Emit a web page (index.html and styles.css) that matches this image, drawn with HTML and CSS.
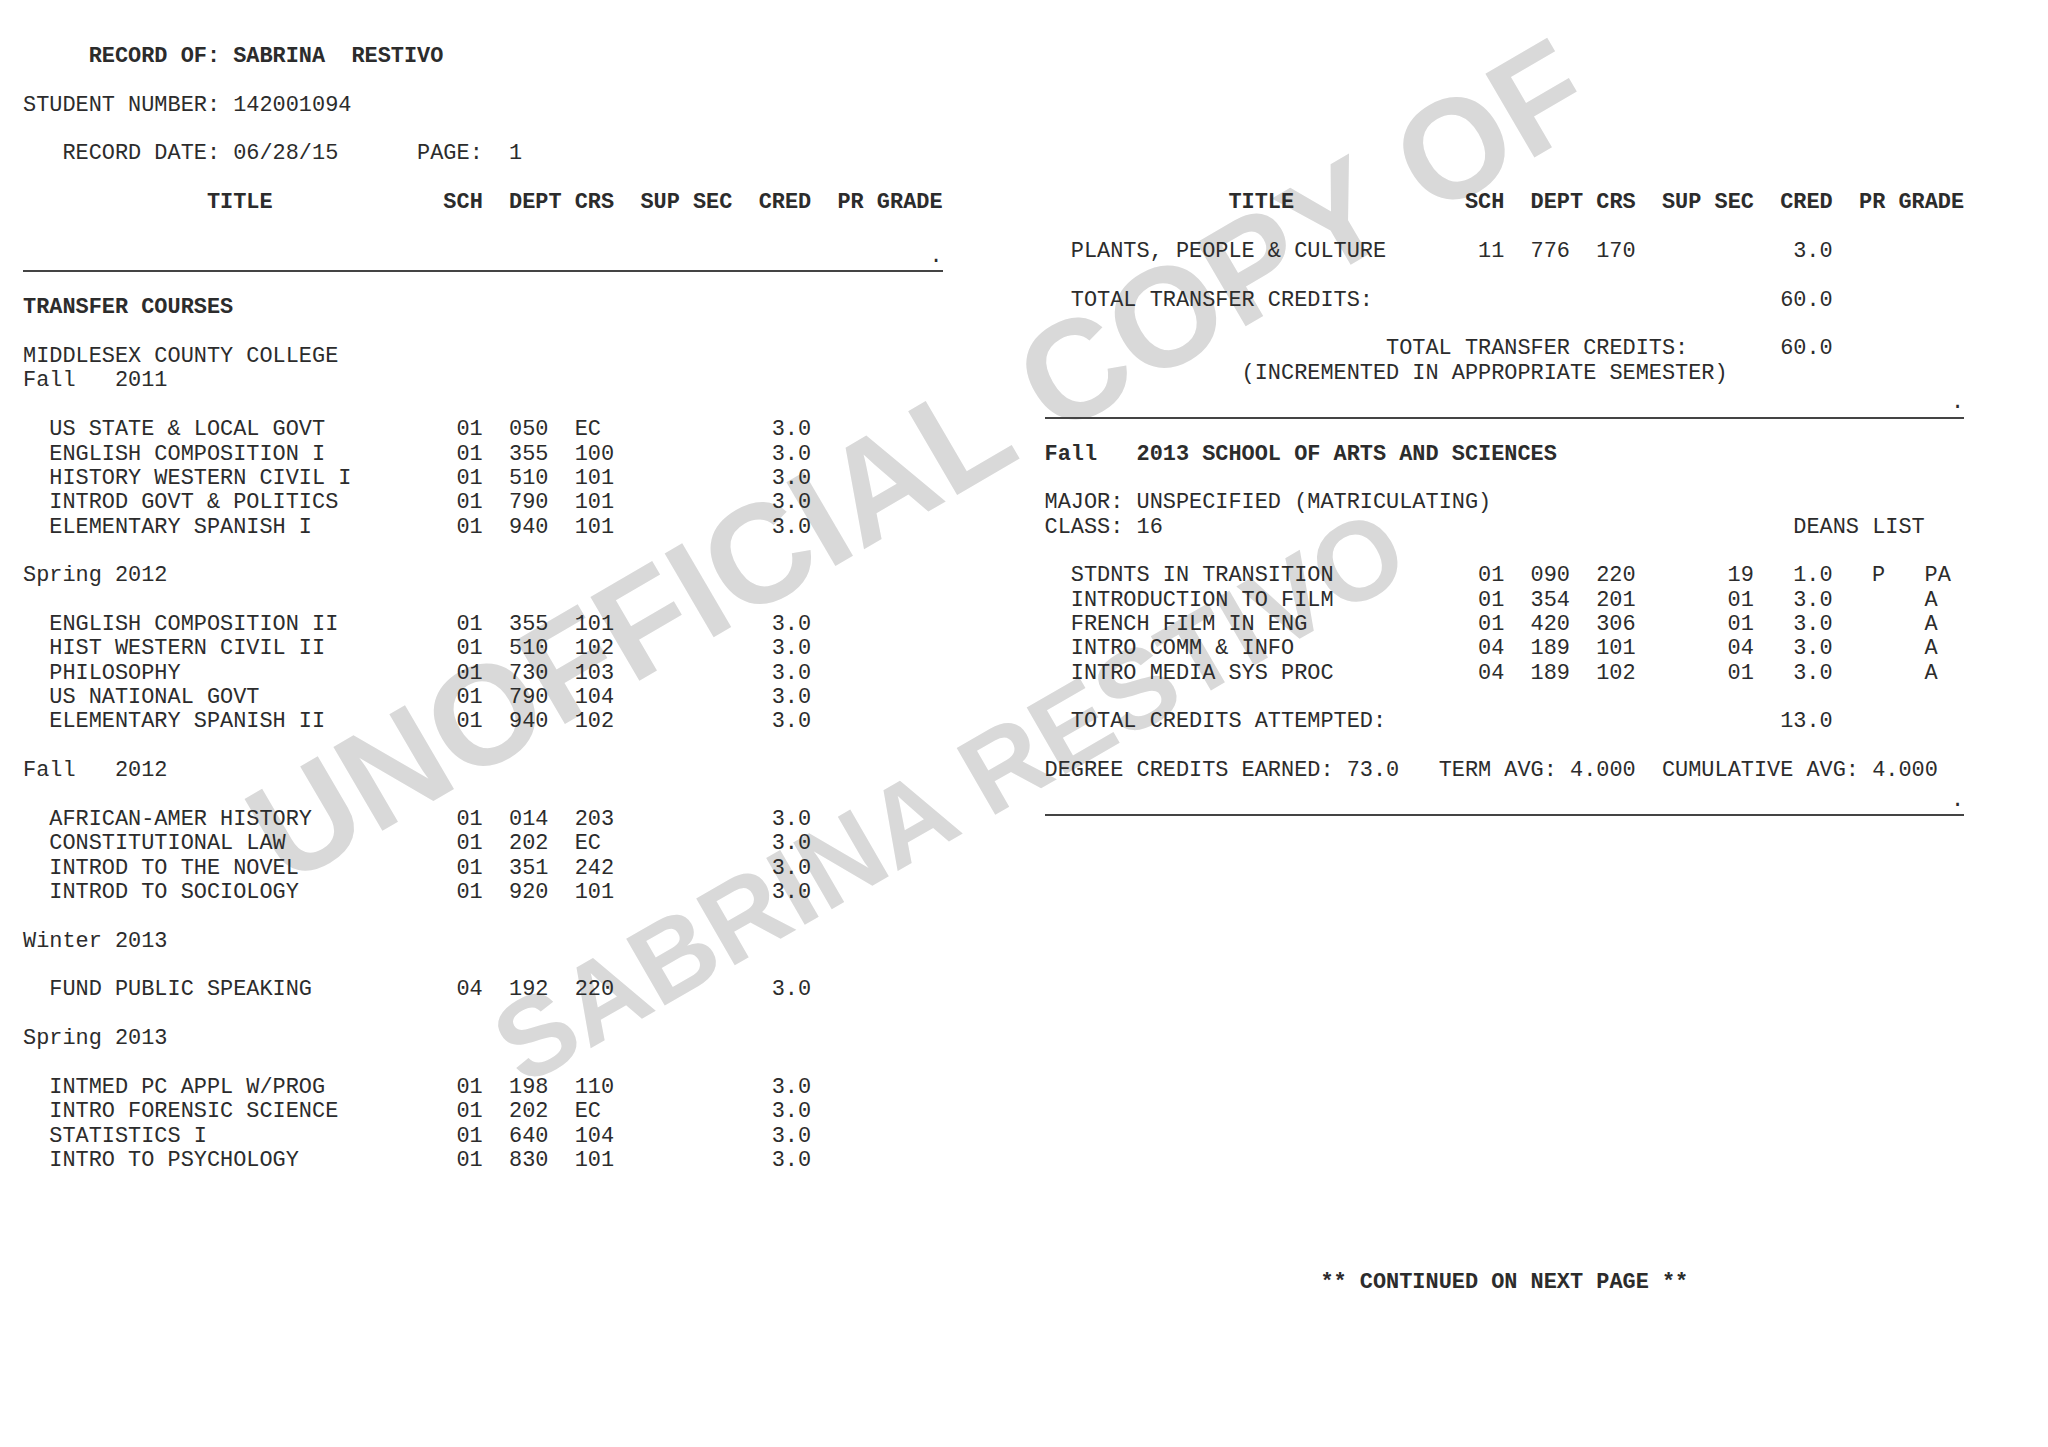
FILE: index.html
```html
<!DOCTYPE html>
<html lang="en">
<head>
<meta charset="utf-8">
<title>Unofficial Transcript</title>
<link rel="stylesheet" href="styles.css">
</head>
<body>
<div class="page">
  <div class="watermark" aria-hidden="true">
    <span class="wm wm-1">UNOFFICIAL COPY OF</span>
    <span class="wm wm-2">SABRINA RESTIVO</span>
  </div>

  <header class="doc-head">
    <div class="l b">     RECORD OF: SABRINA  RESTIVO</div>
    <div class="l sp">STUDENT NUMBER: 142001094</div>
    <div class="l sp">   RECORD DATE: 06/28/15      PAGE:  1</div>
  </header>

  <div class="columns">
    <section class="col">
      <div class="l b colhead">              TITLE             SCH  DEPT CRS  SUP SEC  CRED  PR GRADE</div>
      <div class="rule sp">.</div>

      <div class="l b">TRANSFER COURSES</div>
      <div class="l sp">MIDDLESEX COUNTY COLLEGE</div>
      <div class="l">Fall   2011</div>
      <div class="rows sp">
        <div class="course"><span>US STATE &amp; LOCAL GOVT</span><span>01</span><span>050</span><span>EC</span><span></span><span class="cr">3.0</span><span></span><span></span><span></span></div>
        <div class="course"><span>ENGLISH COMPOSITION I</span><span>01</span><span>355</span><span>100</span><span></span><span class="cr">3.0</span><span></span><span></span><span></span></div>
        <div class="course"><span>HISTORY WESTERN CIVIL I</span><span>01</span><span>510</span><span>101</span><span></span><span class="cr">3.0</span><span></span><span></span><span></span></div>
        <div class="course"><span>INTROD GOVT &amp; POLITICS</span><span>01</span><span>790</span><span>101</span><span></span><span class="cr">3.0</span><span></span><span></span><span></span></div>
        <div class="course"><span>ELEMENTARY SPANISH I</span><span>01</span><span>940</span><span>101</span><span></span><span class="cr">3.0</span><span></span><span></span><span></span></div>
      </div>

      <div class="l sp">Spring 2012</div>
      <div class="rows sp">
        <div class="course"><span>ENGLISH COMPOSITION II</span><span>01</span><span>355</span><span>101</span><span></span><span class="cr">3.0</span><span></span><span></span><span></span></div>
        <div class="course"><span>HIST WESTERN CIVIL II</span><span>01</span><span>510</span><span>102</span><span></span><span class="cr">3.0</span><span></span><span></span><span></span></div>
        <div class="course"><span>PHILOSOPHY</span><span>01</span><span>730</span><span>103</span><span></span><span class="cr">3.0</span><span></span><span></span><span></span></div>
        <div class="course"><span>US NATIONAL GOVT</span><span>01</span><span>790</span><span>104</span><span></span><span class="cr">3.0</span><span></span><span></span><span></span></div>
        <div class="course"><span>ELEMENTARY SPANISH II</span><span>01</span><span>940</span><span>102</span><span></span><span class="cr">3.0</span><span></span><span></span><span></span></div>
      </div>

      <div class="l sp">Fall   2012</div>
      <div class="rows sp">
        <div class="course"><span>AFRICAN-AMER HISTORY</span><span>01</span><span>014</span><span>203</span><span></span><span class="cr">3.0</span><span></span><span></span><span></span></div>
        <div class="course"><span>CONSTITUTIONAL LAW</span><span>01</span><span>202</span><span>EC</span><span></span><span class="cr">3.0</span><span></span><span></span><span></span></div>
        <div class="course"><span>INTROD TO THE NOVEL</span><span>01</span><span>351</span><span>242</span><span></span><span class="cr">3.0</span><span></span><span></span><span></span></div>
        <div class="course"><span>INTROD TO SOCIOLOGY</span><span>01</span><span>920</span><span>101</span><span></span><span class="cr">3.0</span><span></span><span></span><span></span></div>
      </div>

      <div class="l sp">Winter 2013</div>
      <div class="rows sp">
        <div class="course"><span>FUND PUBLIC SPEAKING</span><span>04</span><span>192</span><span>220</span><span></span><span class="cr">3.0</span><span></span><span></span><span></span></div>
      </div>

      <div class="l sp">Spring 2013</div>
      <div class="rows sp">
        <div class="course"><span>INTMED PC APPL W/PROG</span><span>01</span><span>198</span><span>110</span><span></span><span class="cr">3.0</span><span></span><span></span><span></span></div>
        <div class="course"><span>INTRO FORENSIC SCIENCE</span><span>01</span><span>202</span><span>EC</span><span></span><span class="cr">3.0</span><span></span><span></span><span></span></div>
        <div class="course"><span>STATISTICS I</span><span>01</span><span>640</span><span>104</span><span></span><span class="cr">3.0</span><span></span><span></span><span></span></div>
        <div class="course"><span>INTRO TO PSYCHOLOGY</span><span>01</span><span>830</span><span>101</span><span></span><span class="cr">3.0</span><span></span><span></span><span></span></div>
      </div>
    </section>

    <section class="col">
      <div class="l b colhead">              TITLE             SCH  DEPT CRS  SUP SEC  CRED  PR GRADE</div>
      <div class="rows sp">
        <div class="course"><span>PLANTS, PEOPLE &amp; CULTURE</span><span>11</span><span>776</span><span>170</span><span></span><span class="cr">3.0</span><span></span><span></span><span></span></div>
      </div>
      <div class="total sp"><span>TOTAL TRANSFER CREDITS:</span><span class="cr">60.0</span></div>
      <div class="total indent sp"><span>TOTAL TRANSFER CREDITS:</span><span class="cr">60.0</span></div>
      <div class="l">               (INCREMENTED IN APPROPRIATE SEMESTER)</div>
      <div class="rule">.</div>

      <div class="l b">Fall   2013 SCHOOL OF ARTS AND SCIENCES</div>
      <div class="l sp">MAJOR: UNSPECIFIED (MATRICULATING)</div>
      <div class="pair"><span>CLASS: 16</span><span>DEANS LIST</span></div>
      <div class="rows sp">
        <div class="course"><span>STDNTS IN TRANSITION</span><span>01</span><span>090</span><span>220</span><span>19</span><span class="cr">1.0</span><span></span><span>P</span><span>PA</span></div>
        <div class="course"><span>INTRODUCTION TO FILM</span><span>01</span><span>354</span><span>201</span><span>01</span><span class="cr">3.0</span><span></span><span></span><span>A</span></div>
        <div class="course"><span>FRENCH FILM IN ENG</span><span>01</span><span>420</span><span>306</span><span>01</span><span class="cr">3.0</span><span></span><span></span><span>A</span></div>
        <div class="course"><span>INTRO COMM &amp; INFO</span><span>04</span><span>189</span><span>101</span><span>04</span><span class="cr">3.0</span><span></span><span></span><span>A</span></div>
        <div class="course"><span>INTRO MEDIA SYS PROC</span><span>04</span><span>189</span><span>102</span><span>01</span><span class="cr">3.0</span><span></span><span></span><span>A</span></div>
      </div>
      <div class="total sp"><span>TOTAL CREDITS ATTEMPTED:</span><span class="cr">13.0</span></div>
      <div class="l sp">DEGREE CREDITS EARNED: 73.0   TERM AVG: 4.000  CUMULATIVE AVG: 4.000</div>
      <div class="rule">.</div>
    </section>
  </div>

  <div class="columns foot">
    <div class="col"></div>
    <div class="col center b">** CONTINUED ON NEXT PAGE **</div>
  </div>
</div>
</body>
</html>
```

FILE: styles.css
```css
:root {
  --lh: 24.37px;
}

* {
  box-sizing: content-box;
}

html, body {
  margin: 0;
  padding: 0;
  background: #ffffff;
}

.page {
  position: relative;
  z-index: 0;
  width: 2048px;
  height: 1447px;
  overflow: hidden;
  padding: 45px 0 0 23px;
  box-sizing: border-box;
  font-family: "Liberation Mono", "Courier New", monospace;
  font-size: 21.9px;
  line-height: var(--lh);
  color: #2c2c2c;
}

/* watermark */
.watermark {
  position: absolute;
  inset: 0;
  z-index: -1;
  pointer-events: none;
}

.wm {
  position: absolute;
  white-space: nowrap;
  font-family: "Liberation Sans", Arial, sans-serif;
  font-weight: bold;
  color: #d9d9d9;
  line-height: 1;
}

.wm-1 {
  left: 919px;
  top: 461px;
  font-size: 141px;
  transform: translate(-50%, -50%) rotate(-30.3deg);
}

.wm-2 {
  left: 950px;
  top: 797px;
  font-size: 112px;
  transform: translate(-50%, -50%) rotate(-30deg);
}

/* text lines */
.l {
  white-space: pre;
  height: var(--lh);
}

.b {
  font-weight: bold;
}

.sp {
  margin-top: var(--lh);
}

.doc-head {
  margin-bottom: var(--lh);
}

.columns {
  display: flex;
  align-items: flex-start;
  gap: 102px;
}

.col {
  width: 70ch;
  flex: none;
}

.center {
  text-align: center;
}

/* rule with trailing dot */
.rule {
  height: 25.5px;
  padding-top: 5px;
  border-bottom: 2px solid #444;
  margin-bottom: 24px;
  text-align: right;
  line-height: var(--lh);
}

/* course table rows */
.course {
  display: grid;
  grid-template-columns: 31ch 4ch 5ch 10ch 4ch 4ch 3ch 4ch 3ch;
  padding-left: 2ch;
  height: var(--lh);
  white-space: pre;
}

.cr {
  text-align: right;
}

.total {
  display: grid;
  grid-template-columns: 54ch 4ch;
  padding-left: 2ch;
  height: var(--lh);
  white-space: pre;
}

.total.indent span:first-child {
  padding-left: 24ch;
}

.pair {
  display: grid;
  grid-template-columns: 57ch auto;
  height: var(--lh);
  white-space: pre;
}

.foot {
  margin-top: calc(var(--lh) * 4);
}
```
